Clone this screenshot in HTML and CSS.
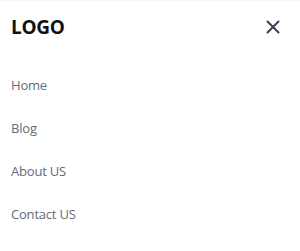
FILE: index.html
```html
<!DOCTYPE html>
<html lang="en">
<head>
    <meta charset="UTF-8">
    <meta name="viewport" content="width=device-width, initial-scale=1.0">
    <title>Menu</title>
    <link rel="stylesheet" href="styles.css">
</head>
<body>

    <!-- Mobile menu panel -->
    <div class="menu">
        <header class="menu-header">
            <span class="logo">LOGO</span>
            <button class="close" aria-label="Close">
                <svg width="14" height="14" viewBox="0 0 14 14">
                    <path d="M1.5 1.5 L12.5 12.5 M12.5 1.5 L1.5 12.5" stroke="#374151" stroke-width="2" stroke-linecap="round"/>
                </svg>
            </button>
        </header>

        <nav class="menu-links">
            <a href="#">Home</a>
            <a href="#">Blog</a>
            <a href="#">About US</a>
            <a href="#">Contact US</a>
        </nav>
    </div>

</body>
</html>
```

FILE: styles.css
```css
* {
    padding: 0;
    margin: 0;
    box-sizing: border-box;
}

body {
    background-color: white;
    font-family: "Open Sans", "Liberation Sans", sans-serif;
}

/* Panel with soft bottom shadow */
.menu {
    background-color: white;
    box-shadow: 0 1px 2px rgba(0, 0, 0, 0.12);
    border-top: 1px solid #f6f6f6;
}

.menu-header {
    display: flex;
    align-items: center;
    justify-content: space-between;
    height: 52px;
    padding: 0 20px 0 11px;
}

.logo {
    font-size: 19px;
    font-weight: 700;
    color: #111;
    letter-spacing: -0.3px;
}

.close {
    display: flex;
    background: none;
    border: none;
    cursor: pointer;
}

.menu-links {
    display: flex;
    flex-direction: column;
    padding-top: 10px;
}

.menu-links a {
    display: flex;
    align-items: center;
    height: 43px;
    padding-left: 11px;
    font-size: 13px;
    letter-spacing: -0.2px;
    color: #646b77;
    text-decoration: none;
}
```
